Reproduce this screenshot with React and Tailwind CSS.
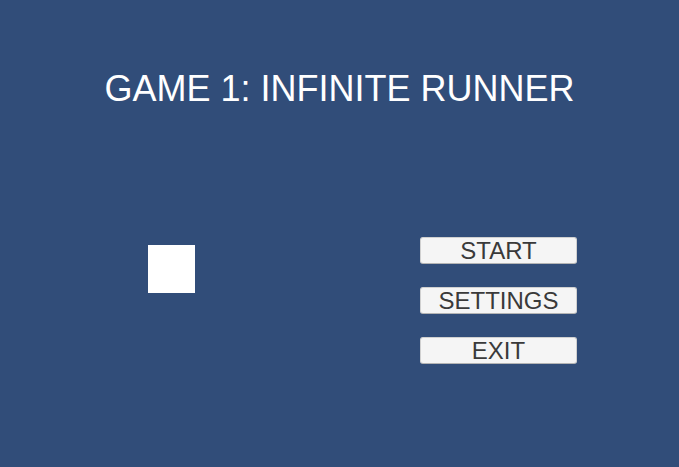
export default function App() {
  const buttons = ["START", "SETTINGS", "EXIT"];

  return (
    <div
      className="w-[679px] h-[467px] bg-[#314d79] flex flex-col overflow-hidden"
      style={{ fontFamily: '"Liberation Sans", Arial, sans-serif' }}
    >
      <h1 className="pt-[68px] text-center text-white text-[36px] leading-[42px]">
        GAME 1: INFINITE RUNNER
      </h1>

      <div className="flex mt-[127px]">
        {/* player block */}
        <div className="ml-[148px] mt-[8px] w-[47px] h-[48px] bg-white" />

        <div className="ml-[225px] flex flex-col gap-[23px]">
          {buttons.map((label) => (
            <button
              key={label}
              className="w-[157px] h-[27px] bg-[#f5f5f5] rounded-[3px] border border-[#d0d0d0] border-b-[#b4b4b4] text-[#3a3a3a] text-[24px] leading-[25px] flex items-center justify-center"
            >
              {label}
            </button>
          ))}
        </div>
      </div>
    </div>
  );
}
